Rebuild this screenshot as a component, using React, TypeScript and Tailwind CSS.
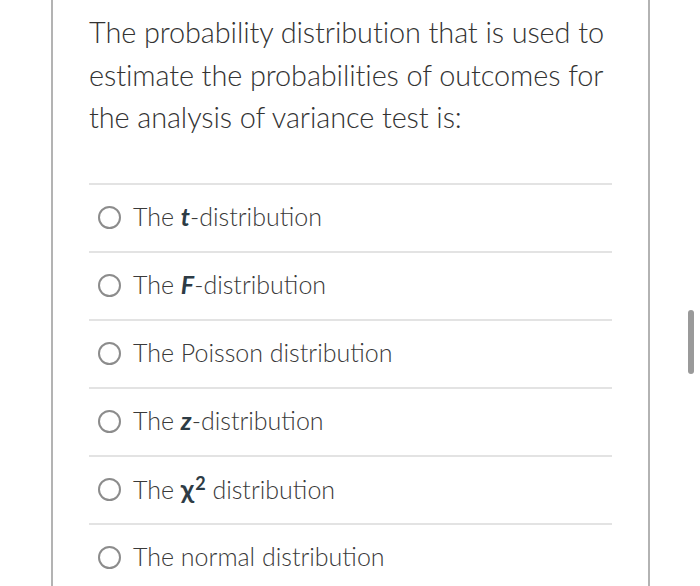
import React from "react";

const Radio = () => (
  <span className="inline-block w-[23px] h-[23px] rounded-full border-[2.5px] border-[#8c8c8c] bg-white shrink-0" />
);

const options: React.ReactNode[] = [
  <>The <b className="italic font-bold text-[#2d3b45]">t</b>-distribution</>,
  <>The <b className="italic font-bold text-[#2d3b45]">F</b>-distribution</>,
  <>The Poisson distribution</>,
  <>The <b className="italic font-bold text-[#2d3b45]">z</b>-distribution</>,
  <>The <span className="font-bold text-[#2d3b45] text-[27px]">χ<sup className="text-[18px] font-bold relative top-[-0.45em] ml-[1px]">2</sup></span> distribution</>,
  <>The normal distribution</>,
];

export default function App() {
  return (
    <div className="w-[700px] h-[586px] bg-white relative overflow-hidden" style={{ fontFamily: "Lato, 'Open Sans', sans-serif" }}>
      <div className="ml-[51px] w-[599px] h-full border-l-2 border-r-2 border-[#b3b3b3] px-[36px]">
        <p className="pt-[11px] text-[28.9px] leading-[42.5px] font-light text-[#333] pb-[44px] tracking-[-0.1px]">
          The probability distribution that is used to estimate the probabilities of outcomes for the analysis of variance test is:
        </p>
        <div>
          {options.map((o, i) => (
            <div key={i} className="border-t-2 border-[#e3e3e3] h-[68px] flex items-center gap-[12px] pl-[9px]">
              <Radio />
              <span className="text-[25px] font-light text-[#3a3a3a] leading-none -mt-[3px]">{o}</span>
            </div>
          ))}
        </div>
      </div>
      <div className="absolute left-[688px] top-[310px] w-[6px] h-[64px] rounded-full bg-[#9a9a9a]" />
    </div>
  );
}
